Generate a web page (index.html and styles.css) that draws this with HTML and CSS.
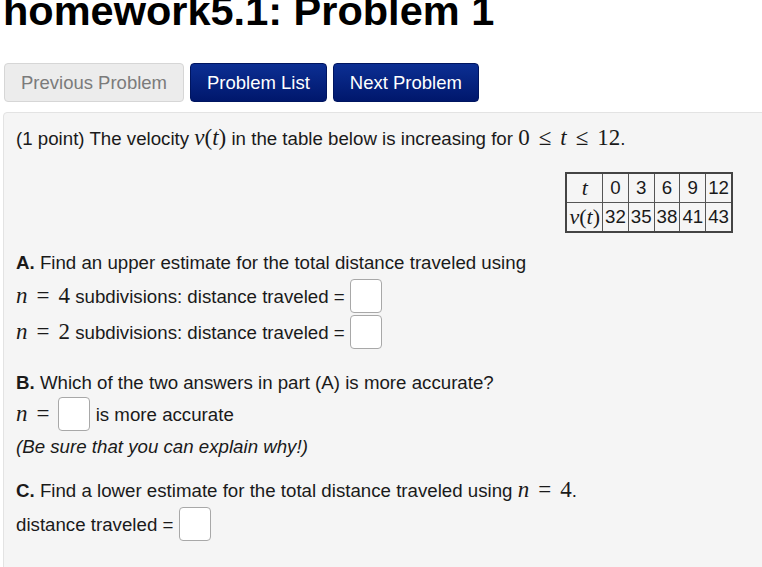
FILE: index.html
```html
<!DOCTYPE html>
<html>
<head>
<meta charset="utf-8">
<link rel="stylesheet" href="styles.css">
</head>
<body>
<h1 class="title">homework5.1: Problem 1</h1>
<div class="nav">
  <span class="btn btn-disabled">Previous Problem</span>
  <span class="btn btn-primary">Problem List</span>
  <span class="btn btn-primary">Next Problem</span>
</div>
<div class="panel">
  <p class="intro">(1 point) The velocity <span class="m"><i>v</i>(<i>t</i>)</span> in the table below is increasing for <span class="m">0<span class="op">≤</span><i>t</i><span class="op">≤</span>12</span>.</p>
  <div class="table-wrap">
    <table class="data">
      <tr><td class="hd"><span class="m"><i>t</i></span></td><td>0</td><td>3</td><td>6</td><td>9</td><td>12</td></tr>
      <tr><td class="hd"><span class="m"><i>v</i>(<i>t</i>)</span></td><td>32</td><td>35</td><td>38</td><td>41</td><td>43</td></tr>
    </table>
  </div>
  <div class="part part-a">
    <div class="line first"><b>A.</b> Find an upper estimate for the total distance traveled using</div>
    <div class="line ans"><span class="m"><i>n</i><span class="op">=</span>4</span> subdivisions: distance traveled = <span class="box"></span></div>
    <div class="line ans"><span class="m"><i>n</i><span class="op">=</span>2</span> subdivisions: distance traveled = <span class="box"></span></div>
  </div>
  <div class="part part-b">
    <div class="line first-b"><b>B.</b> Which of the two answers in part (A) is more accurate?</div>
    <div class="line ans"><span class="m"><i>n</i><span class="op">=</span></span><span class="box"></span> is more accurate</div>
    <div class="line note"><em>(Be sure that you can explain why!)</em></div>
  </div>
  <div class="part part-c">
    <div class="line"><b>C.</b> Find a lower estimate for the total distance traveled using <span class="m"><i>n</i><span class="op">=</span>4</span>.</div>
    <div class="line ans">distance traveled = <span class="box"></span></div>
  </div>
</div>
</body>
</html>
```
FILE: styles.css
```css
html, body {
  margin: 0;
  padding: 0;
  background: #ffffff;
}
body {
  font-family: "Liberation Sans", Arial, sans-serif;
  color: #1a1a1a;
  padding-left: 3px;
  overflow: hidden;
}
.title {
  font-size: 41.5px;
  font-weight: bold;
  line-height: 41px;
  margin: -10px 0 0 0;
  color: #000;
  white-space: nowrap;
}
.nav {
  display: flex;
  gap: 6px;
  margin-top: 32px;
  margin-left: 1px;
}
.btn {
  display: inline-flex;
  align-items: center;
  height: 39px;
  box-sizing: border-box;
  padding: 0 16px;
  font-size: 18.5px;
  border-radius: 4px;
  border: 1px solid transparent;
}
.btn-disabled {
  background: #ececec;
  border-color: #d6d6d6;
  color: #7b7b7b;
}
.btn-primary {
  background: linear-gradient(#0c2f93, #00176c);
  border-color: #001560;
  color: #ffffff;
}
.panel {
  margin-top: 10px;
  background: #f5f5f5;
  border: 1px solid #e3e3e3;
  border-radius: 4px;
  width: 1000px;
  padding: 12px 12px 40px 12px;
  font-size: 18.7px;
}
.intro {
  margin: 0;
  line-height: 26px;
  height: 26px;
}
.m {
  font-family: "Liberation Serif", "Times New Roman", serif;
  font-size: 23px;
}
.m i {
  font-style: italic;
}
.op {
  margin: 0 9px;
}
.table-wrap {
  width: 717px;
  display: flex;
  justify-content: flex-end;
  margin-top: 21px;
}
.data {
  border-collapse: collapse;
  border: 2px solid #444;
  font-size: 18.7px;
}
.data td {
  border: 1px solid #555;
  padding: 0 2px;
  height: 28px;
  text-align: center;
}
.data td.hd {
  padding: 0 2px;
}
.data .m {
  font-size: 22px;
}
.line {
  height: 34px;
  line-height: 34px;
  white-space: nowrap;
}
.line.first {
  height: 33px;
}
.line.first-b {
  height: 31px;
}
.line.ans {
  height: 36px;
}
.line.note {
  height: 28px;
  line-height: 28px;
}
.part-a {
  margin-top: 13px;
}
.part-b {
  margin-top: 15px;
}
.part-c {
  margin-top: 12px;
}
.box {
  display: inline-block;
  vertical-align: -10px;
  box-sizing: border-box;
  width: 32px;
  height: 34px;
  background: #fff;
  border: 1px solid #a8a8a8;
  border-radius: 4px;
}
```
